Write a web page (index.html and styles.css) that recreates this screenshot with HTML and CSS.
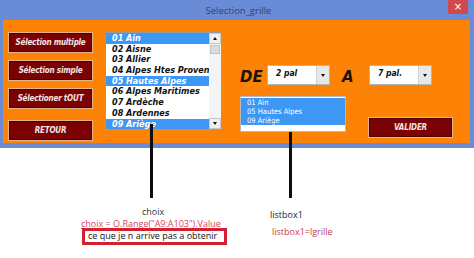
FILE: index.html
```html
<!DOCTYPE html>
<html lang="fr">
<head>
<meta charset="utf-8">
<title>Selection_grille</title>
<link rel="stylesheet" href="styles.css">
</head>
<body>
<div class="page">
  <div class="window">
    <div class="titlebar">
      <span class="title">Selection_grille</span>
      <span class="close">×</span>
    </div>
    <div class="panel">
      <div class="buttons">
        <div class="btn">Sélection multiple</div>
        <div class="btn">Sélection simple</div>
        <div class="btn">Sélectioner tOUT</div>
        <div class="btn retour">RETOUR</div>
      </div>
      <div class="listbox">
        <ul class="items">
          <li class="sel">01 Ain</li>
          <li>02 Aisne</li>
          <li>03 Allier</li>
          <li>04 Alpes Htes Provence</li>
          <li class="sel">05 Hautes Alpes</li>
          <li>06 Alpes Maritimes</li>
          <li>07 Ardèche</li>
          <li>08 Ardennes</li>
          <li class="sel">09 Ariège</li>
        </ul>
        <div class="scrollbar">
          <div class="arrow up"></div>
          <div class="thumb"></div>
          <div class="track"></div>
          <div class="arrow down"></div>
        </div>
      </div>
      <div class="right">
        <div class="row1">
          <span class="big de">DE</span>
          <div class="combo"><span class="val">2 pal</span><span class="drop"></span></div>
          <span class="big a">A</span>
          <div class="combo"><span class="val">7 pal.</span><span class="drop"></span></div>
        </div>
        <div class="row2">
          <ul class="listbox1">
            <li>01 Ain</li>
            <li>05 Hautes Alpes</li>
            <li>09 Ariège</li>
          </ul>
          <div class="btn valider">VALIDER</div>
        </div>
      </div>
    </div>
  </div>
  <div class="line line1"></div>
  <div class="line line2"></div>
  <div class="note choix">choix</div>
  <div class="note code1">choix = O.Range("A9:A103").Value</div>
  <div class="note boxed">ce que je n arrive pas a obtenir</div>
  <div class="note lb">listbox1</div>
  <div class="note code2">listbox1=lgrille</div>
</div>
</body>
</html>
```

FILE: styles.css
```css
* { box-sizing: border-box; }
html, body { margin: 0; padding: 0; background: #fff; }
.page { position: relative; width: 474px; height: 258px; overflow: hidden; }

.window {
  width: 474px;
  background: #6a8cd6;
  padding: 0 4px 5px 3px;
}
.titlebar {
  height: 20px;
  position: relative;
  display: flex;
  align-items: center;
  justify-content: center;
}
.title {
  font-family: "Open Sans", sans-serif;
  font-size: 9.5px;
  color: #2f4270;
  margin-left: 4px;
}
.close {
  position: absolute;
  right: 2px;
  top: 0;
  width: 20px;
  height: 14px;
  background: #cf4a4e;
  color: #fff;
  font-family: "DejaVu Sans", sans-serif;
  font-size: 10px;
  line-height: 14px;
  text-align: center;
}

.panel {
  background: #fd8306;
  height: 123px;
  display: flex;
  align-items: flex-start;
  padding: 12px 0 0 5px;
}

.buttons {
  width: 85px;
  display: flex;
  flex-direction: column;
  gap: 7px;
}
.btn {
  height: 21px;
  background: #7a0203;
  border: 1px solid #e7b58a;
  box-shadow: inset 0 0 0 1px #4d0000;
  color: #f6e4e2;
  font-family: "DejaVu Sans Condensed", "DejaVu Sans", sans-serif;
  font-weight: bold;
  font-style: italic;
  font-size: 8px;
  letter-spacing: -0.2px;
  display: flex;
  align-items: center;
  justify-content: center;
  white-space: nowrap;
}
.btn.retour { margin-top: 4px; }

.listbox {
  margin-left: 12px;
  width: 117px;
  height: 98px;
  background: #fff;
  border: 1px solid #9a9a9a;
  display: flex;
}
.items {
  list-style: none;
  margin: 0;
  padding: 0;
  flex: 1;
  overflow: hidden;
}
.items li {
  height: 10.7px;
  line-height: 10.7px;
  padding-left: 6px;
  font-family: "DejaVu Sans Condensed", "DejaVu Sans", sans-serif;
  font-weight: bold;
  font-style: italic;
  font-size: 9px;
  color: #111;
  white-space: nowrap;
  overflow: hidden;
}
.items li.sel { background: #3d97f4; color: #fff; }

.scrollbar {
  width: 12px;
  display: flex;
  flex-direction: column;
  background: #f4f4f4;
}
.arrow {
  height: 11px;
  background: #f0f0f0;
  border: 1px solid #c8c8c8;
  position: relative;
}
.arrow::after {
  content: "";
  position: absolute;
  left: 3px;
  top: 3px;
  border-left: 2.5px solid transparent;
  border-right: 2.5px solid transparent;
}
.arrow.up::after { border-bottom: 3px solid #111; }
.arrow.down::after { border-top: 3px solid #111; }
.thumb { height: 9px; background: #dcdcdc; border: 1px solid #c4c4c4; margin: 1px 1px 0; }
.track { flex: 1; }

.right {
  margin-left: 18px;
  padding-top: 33px;
  display: flex;
  flex-direction: column;
  gap: 11px;
}
.row1 { display: flex; align-items: flex-start; height: 20px; }
.big {
  font-family: "DejaVu Sans", sans-serif;
  font-weight: bold;
  font-style: italic;
  font-size: 15px;
  color: #1c1208;
  margin-top: 5px;
  line-height: 15px;
}
.big.de { width: 27px; }
.big.a { width: 27px; margin-left: 12px; }
.combo {
  width: 63px;
  height: 20px;
  background: #fff;
  border: 1px solid #b4b4b4;
  display: flex;
  justify-content: space-between;
}
.combo .val {
  font-family: "DejaVu Sans Condensed", "DejaVu Sans", sans-serif;
  font-weight: bold;
  font-style: italic;
  font-size: 8.5px;
  color: #111;
  padding: 2px 0 0 8px;
}
.drop {
  width: 13px;
  background: #e8e8e8;
  border-left: 1px solid #d0d0d0;
  position: relative;
}
.drop::after {
  content: "";
  position: absolute;
  left: 4px;
  top: 8px;
  border-left: 2.5px solid transparent;
  border-right: 2.5px solid transparent;
  border-top: 3px solid #111;
}

.row2 { display: flex; align-items: flex-start; }
.listbox1 {
  list-style: none;
  margin: 0;
  padding: 1px 0 8px;
  width: 106px;
  height: 36px;
  background: #fff;
  border: 1px solid #b8b8b8;
}
.listbox1 li {
  background: #3d97f4;
  color: #fff;
  font-family: "DejaVu Sans Condensed", "DejaVu Sans", sans-serif;
  font-size: 7.5px;
  height: 9px;
  line-height: 9px;
  padding-left: 6px;
}
.btn.valider {
  width: 85px;
  margin-left: 22px;
  margin-top: 21px;
}

.line {
  position: absolute;
  width: 3px;
  background: #0d0d0d;
}
.line1 { left: 150px; top: 124px; height: 74px; }
.line2 { left: 289px; top: 132px; height: 66px; }

.note {
  position: absolute;
  font-family: "Open Sans", sans-serif;
  font-size: 9px;
  line-height: 11px;
  white-space: nowrap;
}
.choix { left: 142px; top: 206px; color: #333; }
.code1 { left: 81px; top: 218px; color: #d8475e; text-decoration: underline; }
.boxed {
  left: 82px;
  top: 228px;
  width: 145px;
  height: 17px;
  border: 3px solid #d62032;
  background: #fff;
  color: #111;
  padding-left: 3px;
  font-size: 9px;
  line-height: 10px;
}
.lb { left: 270px; top: 209px; color: #222; }
.code2 { left: 272px; top: 226px; color: #c83a56; }
```
